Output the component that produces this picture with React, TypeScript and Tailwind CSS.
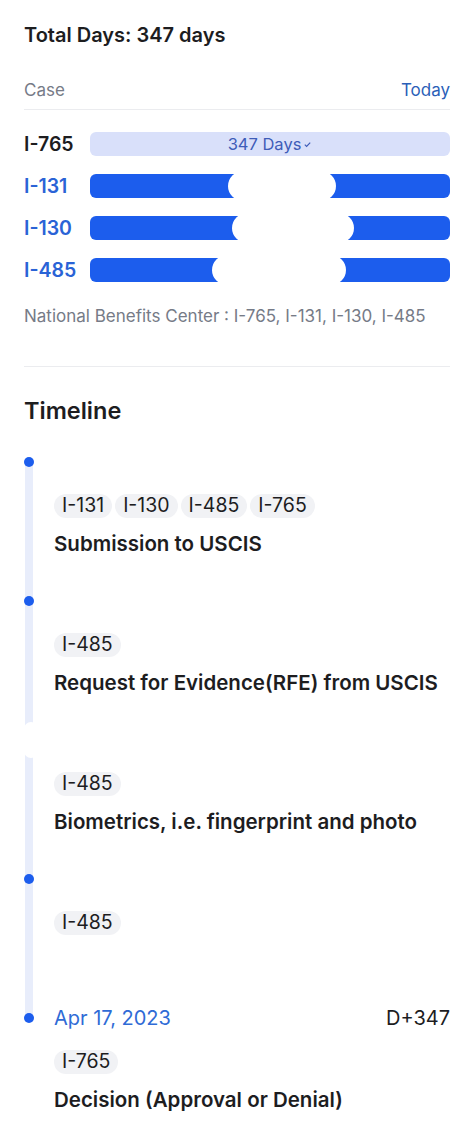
import React from "react";

type Bar = { form: string; gap: [number, number] };

const bars: Bar[] = [
  { form: "I-131", gap: [138, 108] },
  { form: "I-130", gap: [142, 122] },
  { form: "I-485", gap: [122, 134] },
];

type Step = {
  date?: string;
  day?: string;
  forms: string[];
  title?: string;
  hideDot?: boolean;
};

const steps: Step[] = [
  { forms: ["I-131", "I-130", "I-485", "I-765"], title: "Submission to USCIS" },
  { forms: ["I-485"], title: "Request for Evidence(RFE) from USCIS" },
  { forms: ["I-485"], title: "Biometrics, i.e. fingerprint and photo", hideDot: true },
  { forms: ["I-485"] },
  {
    date: "Apr 17, 2023",
    day: "D+347",
    forms: ["I-765"],
    title: "Decision (Approval or Denial)",
  },
];

function Chip({ label }: { label: string }) {
  return (
    <span className="flex h-6 items-center rounded-full bg-[#f1f2f5] px-2 text-[19.5px] leading-none text-[#1d1d1f]">
      {label}
    </span>
  );
}

export default function App() {
  return (
    <div className="min-h-[1143px] bg-white px-6 pt-[21px] font-['Inter',sans-serif] text-[#1d1d1f]">
      <h1 className="text-[20px] font-semibold leading-7">Total Days: 347 days</h1>

      <div className="mt-[29px] flex items-center justify-between border-b border-[#ebecef] pb-[7px] text-[17px] leading-6">
        <span className="text-[#767b87]">Case</span>
        <span className="text-[#2b5fb8]">Today</span>
      </div>

      <div className="mt-[22px] flex flex-col gap-[18px]">
        <div className="flex items-center">
          <span className="w-[66px] text-[19.5px] font-semibold leading-6">I-765</span>
          <div className="flex h-6 flex-1 items-center justify-center rounded-md bg-[#d9e0fa] text-[16.5px] text-[#3e5cb8]">
            347 Days
            <svg width="9" height="9" viewBox="0 0 10 10" className="ml-[2px]">
              <path d="M2 5.2l2 2 4-4.4" fill="none" stroke="#3e5cb8" strokeWidth="1.3" />
            </svg>
          </div>
        </div>
        {bars.map((b) => (
          <div key={b.form} className="flex items-center">
            <span className="w-[66px] text-[19.5px] font-semibold leading-6 text-[#2a63d6]">
              {b.form}
            </span>
            <div className="relative h-6 flex-1 rounded-md bg-[#1c5ded]">
              <div
                className="absolute -top-[3px] h-[30px] rounded-full bg-white"
                style={{ left: b.gap[0], width: b.gap[1] }}
              />
            </div>
          </div>
        ))}
      </div>

      <p className="mt-[22px] text-[17px] leading-6 text-[#767b87]">
        National Benefits Center : I-765, I-131, I-130, I-485
      </p>

      <div className="mt-[38px] border-t border-[#ebecef]" />

      <h2 className="mt-[29px] text-[23.5px] font-semibold leading-[30px]">Timeline</h2>

      <div className="relative mt-[22px]">
        <div className="absolute bottom-[124px] left-px top-[14px] w-2 bg-[#e8edfb]" />
        <div className="absolute left-0 top-[274px] h-[36px] w-[14px] rounded-full bg-white" />
        {steps.map((s, i) => (
          <div key={i} className="relative grid grid-cols-[30px_1fr] pb-[29px]">
            <div className="flex h-7 items-center">
              {!s.hideDot && <span className="h-2.5 w-2.5 rounded-full bg-[#1c5ded]" />}
            </div>
            <div>
              <div className="flex h-7 items-center justify-between">
                <span className="text-[20px] text-[#2f6bd6]">{s.date}</span>
                <span className="text-[20px]">{s.day}</span>
              </div>
              <div className="mt-[18px] flex gap-[3px]">
                {s.forms.map((f) => (
                  <Chip key={f} label={f} />
                ))}
              </div>
              <div className="mt-3 h-7 text-[20.5px] font-semibold leading-7">{s.title}</div>
            </div>
          </div>
        ))}
      </div>
    </div>
  );
}
